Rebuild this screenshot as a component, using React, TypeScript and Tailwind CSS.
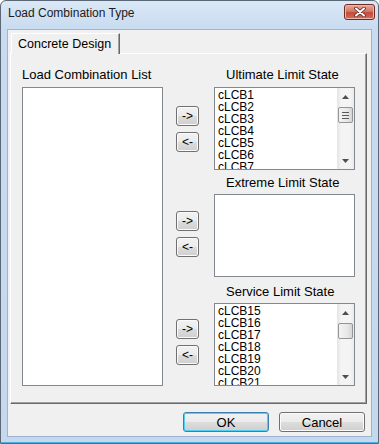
import React from 'react';

const ULTIMATE = ['cLCB1', 'cLCB2', 'cLCB3', 'cLCB4', 'cLCB5', 'cLCB6', 'cLCB7'];
const SERVICE = ['cLCB15', 'cLCB16', 'cLCB17', 'cLCB18', 'cLCB19', 'cLCB20', 'cLCB21'];

function ArrowButton({ label }: { label: string }) {
    return (
        <div className="w-[23px] h-[20px] rounded-[3px] border border-[#707070] bg-[linear-gradient(to_bottom,#f2f2f2_0%,#ebebeb_50%,#dddddd_50%,#cfcfcf_100%)] shadow-[inset_0_0_0_1px_#fbfbfb] flex items-center justify-center text-[12px] leading-none">
            {label}
        </div>
    );
}

function ScrollBar({ grip }: { grip: boolean }) {
    return (
        <div className="w-[17px] h-full flex flex-col bg-[linear-gradient(to_right,#e4e4e4,#f4f4f4_25%,#f4f4f4_75%,#ebebeb)]">
            <div className="h-[17px] flex items-center justify-center">
                <svg width="7" height="4" viewBox="0 0 7 4">
                    <path d="M0 4 L3.5 0 L7 4 Z" fill="#4f4f4f" />
                </svg>
            </div>
            <div className="mx-[1px] mt-[2px] h-[16px] rounded-[2px] border border-[#959595] bg-[linear-gradient(to_right,#f3f3f3,#e8e8e8_60%,#d6d6d6)] flex flex-col items-center justify-center gap-[2px]">
                {grip && (
                    <>
                        <div className="w-[7px] h-[1px] bg-[#5a5a5a]" />
                        <div className="w-[7px] h-[1px] bg-[#5a5a5a]" />
                        <div className="w-[7px] h-[1px] bg-[#5a5a5a]" />
                    </>
                )}
            </div>
            <div className="flex-1" />
            <div className="h-[17px] flex items-center justify-center">
                <svg width="7" height="4" viewBox="0 0 7 4">
                    <path d="M0 0 L3.5 4 L7 0 Z" fill="#4f4f4f" />
                </svg>
            </div>
        </div>
    );
}

function ListBox({ items, height, grip }: { items?: string[]; height: string; grip?: boolean }) {
    return (
        <div className={`w-[141px] ${height} border border-[#828790] bg-white flex overflow-hidden`}>
            <div className="flex-1 pl-[3px] pt-[1px] overflow-hidden">
                {items?.map((it) => (
                    <div key={it} className="h-[12px] text-[12px] leading-[12px] whitespace-nowrap">
                        {it}
                    </div>
                ))}
            </div>
            {items && <ScrollBar grip={!!grip} />}
        </div>
    );
}

function StateGroup({
    title,
    labelClass,
    btnPad,
    items,
    grip,
}: {
    title: string;
    labelClass: string;
    btnPad: string;
    items?: string[];
    grip?: boolean;
}) {
    return (
        <div className="flex flex-col">
            <div className={`${labelClass} flex items-center pl-[50px] text-[13px] leading-none whitespace-nowrap`}>
                {title}
            </div>
            <div className="flex">
                <div className={`w-[23px] ${btnPad} flex flex-col gap-[6px]`}>
                    <ArrowButton label="->" />
                    <ArrowButton label="<-" />
                </div>
                <div className="ml-[15px]">
                    <ListBox items={items} height="h-[83px]" grip={grip} />
                </div>
            </div>
        </div>
    );
}

export default function App() {
    return (
        <div className="w-[379px] h-[444px] font-['Liberation_Sans',Arial,sans-serif] text-black select-none">
            <div className="h-full flex flex-col rounded-t-[6px] border border-[#5b6878] bg-[linear-gradient(to_bottom,#dae8f6,#c9dbf0_28px,#c4d8ee)] shadow-[inset_0_-1px_0_#4aaee2]">
                {/* Title bar */}
                <div className="h-[28px] flex items-start justify-between pl-[7px] pr-[3px]">
                    <span className="mt-[5px] text-[12px] leading-[14px] text-[#1b1b1b]">Load Combination Type</span>
                    <div className="mt-[3px] w-[31px] h-[16px] rounded-[3px] border border-[#6e2b24] bg-[linear-gradient(to_bottom,#e8a899,#d47968_45%,#c44a38_55%,#d2705c)] shadow-[inset_0_0_0_1px_#efb7aa] flex items-center justify-center">
                        <svg width="12" height="10" viewBox="0 0 12 10">
                            <path d="M2 1.5 L10 8.5 M10 1.5 L2 8.5" stroke="#5a2a24" strokeWidth="3.6" strokeLinecap="round" />
                            <path d="M2 1.5 L10 8.5 M10 1.5 L2 8.5" stroke="#ffffff" strokeWidth="2" strokeLinecap="round" />
                        </svg>
                    </div>
                </div>

                {/* Client area */}
                <div className="flex-1 mx-[6px] mb-[6px] border border-[#9fb3ca] bg-[#f0f0f0] flex flex-col">
                    {/* Tab */}
                    <div className="pl-[3px] pt-[3px] flex">
                        <div className="relative z-10 -mb-[1px] w-[109px] h-[21px] bg-[#f0f0f0] border-t border-l border-white border-r border-r-[#696969] shadow-[inset_-1px_0_0_#a0a0a0] pl-[6px] flex items-center text-[12.5px] leading-none">
                            Concrete Design
                        </div>
                    </div>

                    {/* Tab panel */}
                    <div className="ml-[2px] w-[357px] h-[351px] border-t border-l border-white border-r border-b border-r-[#696969] border-b-[#696969] shadow-[inset_-1px_-1px_0_#a0a0a0] flex pl-[11px] pt-[9px]">
                        <div className="w-[141px] flex flex-col">
                            <div className="h-[22px] flex items-center text-[13px] leading-none whitespace-nowrap">
                                Load Combination List
                            </div>
                            <div className="mt-[2px]">
                                <ListBox height="h-[299px]" />
                            </div>
                        </div>

                        <div className="ml-[13px] flex flex-col">
                            <StateGroup
                                title="Ultimate Limit State"
                                labelClass="h-[24px] pb-[2px]"
                                btnPad="pt-[19px]"
                                items={ULTIMATE}
                                grip
                            />
                            <StateGroup title="Extreme Limit State" labelClass="h-[24px]" btnPad="pt-[17px]" />
                            <StateGroup
                                title="Service Limit State"
                                labelClass="h-[26px] pt-[3px]"
                                btnPad="pt-[16px]"
                                items={SERVICE}
                            />
                        </div>
                    </div>

                    {/* Footer buttons */}
                    <div className="mt-[8px] flex justify-end gap-[10px] pr-[6px]">
                        <div className="w-[86px] h-[20px] rounded-[3px] border border-[#3c7fb1] bg-[linear-gradient(to_bottom,#f2f2f2_0%,#ebebeb_50%,#dddddd_50%,#cfcfcf_100%)] shadow-[inset_0_0_0_1px_#4fd0f6] flex items-center justify-center text-[13px] leading-none">
                            OK
                        </div>
                        <div className="w-[86px] h-[20px] rounded-[3px] border border-[#707070] bg-[linear-gradient(to_bottom,#f2f2f2_0%,#ebebeb_50%,#dddddd_50%,#cfcfcf_100%)] shadow-[inset_0_0_0_1px_#fbfbfb] flex items-center justify-center text-[13px] leading-none">
                            Cancel
                        </div>
                    </div>
                </div>
            </div>
        </div>
    );
}
